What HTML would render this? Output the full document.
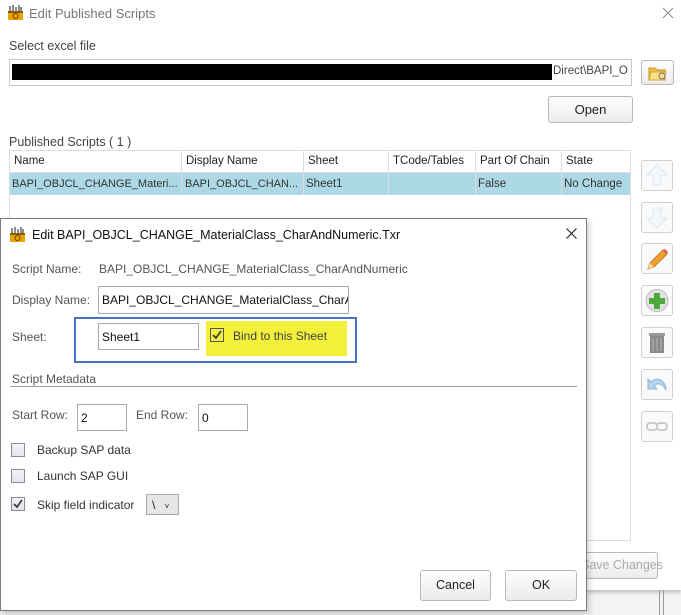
<!DOCTYPE html>
<html><head><style>
*{box-sizing:border-box;margin:0;padding:0}
body{width:681px;height:615px;overflow:hidden;background:#f3f3f3;font-family:"Liberation Sans",sans-serif;font-size:12px;color:#222;position:relative}
.a{position:absolute}
.main{left:0;top:0;width:681px;height:590px;background:#fff;box-shadow:0 2px 4px rgba(0,0,0,.25)}
.tb{border:1px solid #c8c8c8;background:#fff}
.btn{border:1px solid #b8b8b8;border-radius:3px;background:linear-gradient(#fdfdfd,#ececec);text-align:center;white-space:nowrap}
.side{left:641px;width:32px;height:31px;border:1px solid #d0d0d0;border-radius:3px;background:#fafafa}
.cb{width:14px;height:14px;border:1px solid #8a8a9a;background:linear-gradient(#f4f4f6,#e4e4ea)}
.lbl{color:#555}
.c{position:absolute;white-space:nowrap;overflow:hidden;font-size:11.5px}
</style></head><body>
<div class="a main">
  <svg class="a" style="left:7px;top:4px" width="17" height="17" viewBox="0 0 17 17"><rect x="1" y="8" width="15" height="8" fill="#e8a400"/><rect x="1" y="7" width="15" height="2" fill="#8a5a00"/><circle cx="8.5" cy="12" r="2.5" fill="none" stroke="#6a3a00"/><path d="M3 7V2M6 7V1M9 7V3M12 7V1M14 7V3" stroke="#666" stroke-width="1.5"/></svg>
  <div class="a" style="left:29px;top:6px;font-size:13px;color:#777">Edit Published Scripts</div>
  <svg class="a" style="left:662px;top:7px" width="12" height="12"><path d="M1 1L11 11M11 1L1 11" stroke="#888" stroke-width="1"/></svg>
  <div class="a" style="left:9px;top:39px;font-size:12.5px;color:#444">Select excel file</div>
  <div class="a tb" style="left:9px;top:59px;width:623px;height:27px"></div>
  <div class="a" style="left:12px;top:64px;width:540px;height:16px;background:#000"></div>
  <div class="a" style="left:553px;top:65px;color:#444;font-size:11.5px">Direct\BAPI_O</div>
  <div class="a btn" style="left:641px;top:60px;width:33px;height:25px"></div>
  <svg class="a" style="left:647px;top:64px" width="22" height="18"><path d="M2 4h6l2 2h8v10H2z" fill="#f2c24a" stroke="#c8901a"/><path d="M4 8h15l-2 8H2z" fill="#fbe08a" stroke="#d7a32c"/><circle cx="15" cy="12" r="3" fill="none" stroke="#777"/></svg>
  <div class="a btn" style="left:548px;top:96px;width:85px;height:27px;line-height:25px;font-size:13px">Open</div>
  <div class="a" style="left:9px;top:135px;font-size:12.5px;color:#444">Published Scripts ( 1 )</div>
  <div class="a" style="left:9px;top:150px;width:622px;height:391px;border:1px solid #ddd;background:#fff"></div>
  <div class="a" style="left:10px;top:151px;width:620px;height:22px;background:#fff;border-bottom:1px solid #ddd"></div>
  <div class="a" style="left:10px;top:173px;width:620px;height:22px;background:#add8e6"></div>
  <div class="a" style="left:181px;top:151px;width:1px;height:44px;background:#ddd"></div>
  <div class="a" style="left:303px;top:151px;width:1px;height:44px;background:#ddd"></div>
  <div class="a" style="left:388px;top:151px;width:1px;height:44px;background:#ddd"></div>
  <div class="a" style="left:475px;top:151px;width:1px;height:44px;background:#ddd"></div>
  <div class="a" style="left:561px;top:151px;width:1px;height:44px;background:#ddd"></div>
  <div class="c" style="left:14px;top:155px">Name</div>
  <div class="c" style="left:186px;top:155px">Display Name</div>
  <div class="c" style="left:308px;top:155px">Sheet</div>
  <div class="c" style="left:393px;top:155px">TCode/Tables</div>
  <div class="c" style="left:480px;top:155px">Part Of Chain</div>
  <div class="c" style="left:566px;top:155px">State</div>
  <div class="c" style="left:12px;top:178px;width:168px;color:#333;font-size:11px">BAPI_OBJCL_CHANGE_Materi...</div>
  <div class="c" style="left:185px;top:178px;width:117px;color:#333;font-size:11px">BAPI_OBJCL_CHAN...</div>
  <div class="c" style="left:306px;top:178px;color:#333">Sheet1</div>
  <div class="c" style="left:478px;top:178px;color:#333">False</div>
  <div class="c" style="left:564px;top:178px;color:#333">No Change</div>
  <div class="a side" style="top:160px"><svg width="30" height="29"><path d="M15 4L25 14h-6v10h-8V14H5z" fill="#f4f8fb" stroke="#dde6ee"/></svg></div>
  <div class="a side" style="top:202px"><svg width="30" height="29"><path d="M15 25L25 15h-6V5h-8v10H5z" fill="#f4f8fb" stroke="#dde6ee"/></svg></div>
  <div class="a side" style="top:243px"><svg width="30" height="29"><path d="M6 25l2-6L21 6l4 4L12 23z" fill="#f0a030" stroke="#c47818"/><path d="M6 25l2-6 4 4z" fill="#f4d9a0"/><path d="M21 6l4 4 1-2-3-3z" fill="#e05a6a"/></svg></div>
  <div class="a side" style="top:285px"><svg width="30" height="29"><circle cx="15" cy="14.5" r="11" fill="#e2e2e2" stroke="#bbb"/><path d="M12 7h6v5h5v6h-5v5h-6v-5H7v-6h5z" fill="#4caa3c"/></svg></div>
  <div class="a side" style="top:327px"><svg width="30" height="29"><rect x="8" y="8" width="14" height="17" fill="#8a8a8a"/><rect x="7" y="5" width="16" height="3" fill="#999"/><path d="M11 10v13M15 10v13M19 10v13" stroke="#b8b8b8"/></svg></div>
  <div class="a side" style="top:369px"><svg width="30" height="29"><path d="M24 20C24 10 14 6 9 12l-3-3v10h9l-3-3c4-4 9-2 12 4z" fill="#b8d4ec" stroke="#8eb6da"/></svg></div>
  <div class="a side" style="top:411px"><svg width="30" height="29"><rect x="5" y="11" width="10" height="7" rx="3" fill="none" stroke="#ccc" stroke-width="2"/><rect x="15" y="11" width="10" height="7" rx="3" fill="none" stroke="#ccc" stroke-width="2"/></svg></div>
  <div class="a btn" style="left:570px;top:552px;width:88px;height:27px;line-height:25px;color:#aaa;font-size:12.5px;padding-left:10px">Save Changes</div>
  <div class="a" style="left:659px;top:590px;width:1px;height:25px;background:#999"></div>
  <div class="a" style="left:663px;top:590px;width:1px;height:25px;background:#999"></div>
</div>

<div class="a" style="left:0;top:218px;width:587px;height:393px;background:#fff;border:1px solid #7a7a7a;box-shadow:2px 3px 6px rgba(0,0,0,.2)">
  <svg class="a" style="left:8px;top:7px" width="17" height="17" viewBox="0 0 17 17"><rect x="1" y="8" width="15" height="8" fill="#e8a400"/><rect x="1" y="7" width="15" height="2" fill="#8a5a00"/><circle cx="8.5" cy="12" r="2.5" fill="none" stroke="#6a3a00"/><path d="M3 7V2M6 7V1M9 7V3M12 7V1M14 7V3" stroke="#666" stroke-width="1.5"/></svg>
  <div class="a" style="left:31px;top:9px;font-size:12.5px;color:#111">Edit BAPI_OBJCL_CHANGE_MaterialClass_CharAndNumeric.Txr</div>
  <svg class="a" style="left:565px;top:9px" width="11" height="11"><path d="M0.5 0.5L10.5 10.5M10.5 0.5L0.5 10.5" stroke="#222" stroke-width="1.1"/></svg>
  <div class="a lbl" style="left:11px;top:43px">Script Name:</div>
  <div class="a lbl" style="left:98px;top:43px">BAPI_OBJCL_CHANGE_MaterialClass_CharAndNumeric</div>
  <div class="a lbl" style="left:11px;top:74px">Display Name:</div>
  <div class="a tb" style="left:97px;top:67px;width:251px;height:28px;overflow:hidden;white-space:nowrap;padding:6px 3px;color:#111;border-color:#aaa">BAPI_OBJCL_CHANGE_MaterialClass_CharAndNumeric</div>
  <div class="a" style="left:73px;top:98px;width:283px;height:46px;border:2px solid #4a72c4"></div>
  <div class="a lbl" style="left:11px;top:111px">Sheet:</div>
  <div class="a tb" style="left:97px;top:104px;width:101px;height:27px;padding:6px 3px;color:#111;border-color:#aaa">Sheet1</div>
  <div class="a" style="left:205px;top:102px;width:141px;height:35px;background:#f3f03c"></div>
  <div class="a cb" style="left:209px;top:109px;background:#f3f03c;border-color:#555"><svg width="12" height="12" style="display:block"><path d="M2 6l3 3 5-7" stroke="#333" stroke-width="1.6" fill="none"/></svg></div>
  <div class="a" style="left:232px;top:110px;color:#444">Bind to this Sheet</div>
  <div class="a lbl" style="left:11px;top:153px">Script Metadata</div>
  <div class="a" style="left:9px;top:167px;width:567px;height:1px;background:#999"></div>
  <div class="a lbl" style="left:11px;top:189px">Start Row:</div>
  <div class="a tb" style="left:76px;top:185px;width:50px;height:27px;padding:6px 3px;color:#111;border-color:#aaa">2</div>
  <div class="a lbl" style="left:135px;top:189px">End Row:</div>
  <div class="a tb" style="left:197px;top:185px;width:50px;height:27px;padding:6px 3px;color:#111;border-color:#aaa">0</div>
  <div class="a cb" style="left:10px;top:224px"></div>
  <div class="a" style="left:36px;top:224px;color:#333">Backup SAP data</div>
  <div class="a cb" style="left:10px;top:250px"></div>
  <div class="a" style="left:36px;top:250px;color:#333">Launch SAP GUI</div>
  <div class="a cb" style="left:10px;top:278px"><svg width="12" height="12" style="display:block"><path d="M2 6l3 3 5-7" stroke="#333" stroke-width="1.6" fill="none"/></svg></div>
  <div class="a" style="left:36px;top:279px;color:#333">Skip field indicator</div>
  <div class="a" style="left:145px;top:275px;width:33px;height:21px;border:1px solid #aaa;background:#e6e6e6;padding:3px 5px;font-size:12px">\ <span style="font-size:8px;margin-left:6px">˅</span></div>
  <div class="a btn" style="left:419px;top:351px;width:71px;height:31px;line-height:29px;font-size:12.5px">Cancel</div>
  <div class="a btn" style="left:504px;top:351px;width:72px;height:31px;line-height:29px;font-size:12.5px">OK</div>
</div>
</body></html>
